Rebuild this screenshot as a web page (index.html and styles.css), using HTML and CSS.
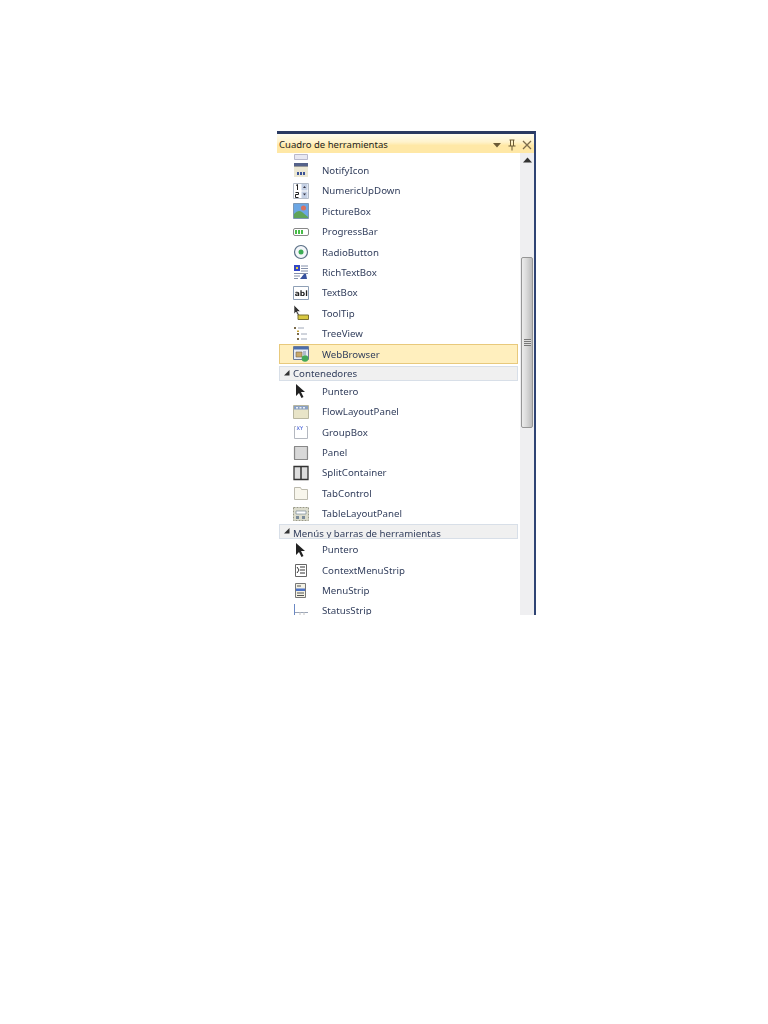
FILE: index.html
```html
<!DOCTYPE html>
<html lang="es">
<head>
<meta charset="utf-8">
<title>Cuadro de herramientas</title>
<link rel="stylesheet" href="styles.css">
</head>
<body>
<svg class="defs" width="0" height="0" aria-hidden="true">
  <symbol id="pointer" viewBox="0 0 16 16"><path d="M3 1v12l3-3 2.500 5 2-1-2.500-5h4z" fill="#222"/></symbol>
  <symbol id="tri" viewBox="0 0 8 8"><path d="M1 6.500 6.500 1v5.500z" fill="#333"/></symbol>
</svg>
<section class="panel">
  <header class="title">
    <span class="title-text">Cuadro de herramientas</span>
    <span class="title-btns">
      <svg width="10" height="10" viewBox="0 0 10 10"><path d="M1 3h8L5 7.500z" fill="#6b5a35"/></svg>
      <svg width="10" height="12" viewBox="0 0 10 12"><path d="M2.500 1h5M3.500 1v6M6.500 1v6M1.500 7h7M5 7v4.500" stroke="#6b5a35" fill="none"/></svg>
      <svg width="10" height="10" viewBox="0 0 10 10"><path d="M1 1l8 8M9 1 1 9" stroke="#7d6d4c" stroke-width="1.300" fill="none"/></svg>
    </span>
  </header>
  <div class="body">
    <div class="list">
      <div class="clip-top"><svg class="ico" width="16" height="16" viewBox="0 0 16 16"><path d="M1.500 10.500h13v5h-13z" fill="#e8e8f2" stroke="#b8b8cc"/></svg></div>
      <div class="row"><svg class="ico" width="16" height="16" viewBox="0 0 16 16"><path d="M1 1h14v3H1z" fill="#55628a"/><path d="M1 4h14v11H1z" fill="#ece8d4"/><path d="M1 4.500h14" stroke="#999"/><path d="M4 10h2v3H4zM7 10h2v3H7zM10 10h2v3h-2z" fill="#3a5296"/></svg><span>NotifyIcon</span></div>
      <div class="row"><svg class="ico" width="16" height="16" viewBox="0 0 16 16"><path d="M.5.500h15v15H.5z" fill="#fff" stroke="#b4bcc8"/><path d="M8.500 1h6v6.500h-6zM8.500 8.500h6V15h-6z" fill="#c4d0e4"/><path d="M3 2.500l1.500-1v5.500M2.500 9.500h3v2h-3v3h3" stroke="#222" fill="none"/><path d="M10 5l1.500-2L13 5zM10 10.500l1.500 2 1.500-2z" fill="#334"/></svg><span>NumericUpDown</span></div>
      <div class="row"><svg class="ico" width="16" height="16" viewBox="0 0 16 16"><path d="M.5.500h15v15H.5z" fill="#6ba6e4" stroke="#7c96b4"/><path d="M1 15V11q4-5 8-2l6 5v1z" fill="#5fa45a"/><circle cx="10.500" cy="5" r="2.500" fill="#d8705e"/></svg><span>PictureBox</span></div>
      <div class="row"><svg class="ico" width="16" height="16" viewBox="0 0 16 16"><rect x=".5" y="4.500" width="15" height="7" rx="1.500" fill="#fff" stroke="#888"/><path d="M2 6h2v4H2zM5 6h2v4H5zM8 6h2v4H8z" fill="#48bc48"/></svg><span>ProgressBar</span></div>
      <div class="row"><svg class="ico" width="16" height="16" viewBox="0 0 16 16"><circle cx="8" cy="8" r="6.500" fill="#f4f6fa" stroke="#5a7086" stroke-width="1.200"/><circle cx="8" cy="8" r="2.500" fill="#3cac54"/></svg><span>RadioButton</span></div>
      <div class="row"><svg class="ico" width="16" height="16" viewBox="0 0 16 16"><path d="M1 1h6v6H1z" fill="#3347c4"/><path d="M3 3h2v2H3z" fill="#e8d040"/><path d="M8 2h7M8 4.500h7M8 7h7M1 9.500h14M1 12h6M1 14.500h4" stroke="#8490aa"/><path d="M7 15l4-5h2l1 5z" fill="#38529e"/></svg><span>RichTextBox</span></div>
      <div class="row"><svg class="ico" width="16" height="16" viewBox="0 0 16 16"><path d="M.5 1.500h15v13H.5z" fill="#fff" stroke="#8fa0b6"/><text x="1.800" y="11" class="ico-text">abl</text></svg><span>TextBox</span></div>
      <div class="row"><svg class="ico" width="16" height="16" viewBox="0 0 16 16"><path d="M1 0v9l2-2 2 4 1.500-1-2-3.500h3z" fill="#333" stroke="#fff" stroke-width=".6"/><path d="M5 10h10.500v4.500H5z" fill="#d8c840" stroke="#7a7030"/></svg><span>ToolTip</span></div>
      <div class="row"><svg class="ico" width="16" height="16" viewBox="0 0 16 16"><path d="M1 1h2v2H1zM4 7h2v2H4zM4 12h2v2H4z" fill="#7a6a4a"/><path d="M5 2h6M8 8h6M8 13h6" stroke="#a0a8b8" fill="none"/><path d="M4 4.500h2v1.500H4z" fill="#c8a030"/></svg><span>TreeView</span></div>
      <div class="row row-sel"><svg class="ico" width="16" height="16" viewBox="0 0 16 16"><path d="M.5.500h15v13H.5z" fill="#e8ecf4" stroke="#6a7a98"/><path d="M1 1h14v2.500H1z" fill="#4c6eac"/><path d="M3 6h6v5H3z" fill="#c8a868" stroke="#77644a" stroke-width=".6"/><path d="M10 6h3M10 8h3" stroke="#7a88a4"/><circle cx="12" cy="12.500" r="3.300" fill="#44a858"/></svg><span>WebBrowser</span></div>
      <div class="group"><svg class="tri" width="8" height="8"><use href="#tri"/></svg><span>Contenedores</span></div>
      <div class="row"><svg class="ico" width="16" height="16"><use href="#pointer"/></svg><span>Puntero</span></div>
      <div class="row"><svg class="ico" width="16" height="16" viewBox="0 0 16 16"><path d="M.5 1.500h15v13H.5z" fill="#e8e4c8" stroke="#b8b6a0"/><path d="M1 2h14v3.500H1z" fill="#8aa0c2"/><path d="M3 3h2v1.500H3zM6.500 3h2v1.500h-2zM10 3h2v1.500h-2z" fill="#e8eef8"/></svg><span>FlowLayoutPanel</span></div>
      <div class="row"><svg class="ico" width="16" height="16" viewBox="0 0 16 16"><path d="M3 2.500H1.500v12h13v-12H13" fill="#fff" stroke="#b4b8c0"/><text x="3.500" y="6" class="ico-xy">XY</text></svg><span>GroupBox</span></div>
      <div class="row"><svg class="ico" width="16" height="16" viewBox="0 0 16 16"><path d="M1.500 1.500h13v13h-13z" fill="#d8d8d8" stroke="#222" stroke-width="1.200" stroke-dasharray="1 1"/></svg><span>Panel</span></div>
      <div class="row"><svg class="ico" width="16" height="16" viewBox="0 0 16 16"><path d="M1 1.500h14v13H1z" fill="#ddd" stroke="#333" stroke-width="1.300"/><path d="M8 1.500v13" stroke="#333" stroke-width="1.500"/></svg><span>SplitContainer</span></div>
      <div class="row"><svg class="ico" width="16" height="16" viewBox="0 0 16 16"><path d="M1.500 14.500v-12h6l1 2h6v10z" fill="#f8f6ec" stroke="#bcbaae"/></svg><span>TabControl</span></div>
      <div class="row"><svg class="ico" width="16" height="16" viewBox="0 0 16 16"><path d="M.5 1.500h15v13H.5z" fill="#dcdccc" stroke="#9a9a88" stroke-dasharray="2 1"/><path d="M3 5h10v3H3z" fill="#fff" stroke="#7a8a9a" stroke-width=".7"/><path d="M3 10h3v3H3zM9 10h3v3H9z" fill="#7a8a9a"/></svg><span>TableLayoutPanel</span></div>
      <div class="group group-clip"><svg class="tri" width="8" height="8"><use href="#tri"/></svg><span>Menús y barras de herramientas</span></div>
      <div class="row"><svg class="ico" width="16" height="16"><use href="#pointer"/></svg><span>Puntero</span></div>
      <div class="row"><svg class="ico" width="16" height="16" viewBox="0 0 16 16"><path d="M2.500 2.500h11v12h-11z" fill="#fff" stroke="#666"/><path d="M7 5h5M7 8h5M7 11h5M4 5l2 3-2 3" stroke="#333" fill="none"/></svg><span>ContextMenuStrip</span></div>
      <div class="row"><svg class="ico" width="16" height="16" viewBox="0 0 16 16"><path d="M2.500 1.500h10v14h-10z" fill="#f4f2e4" stroke="#777"/><path d="M4 4h4M4 11h7M4 13.500h7" stroke="#555"/><path d="M3 6.500h9v2.500H3z" fill="#4c72c8"/></svg><span>MenuStrip</span></div>
      <div class="row"><svg class="ico" width="16" height="16" viewBox="0 0 16 16"><path d="M1.500 1v11" stroke="#6a88c4"/><path d="M2 9.500h13" stroke="#9aa4b6"/><path d="M7 9v3M11 9v3" stroke="#c4c4c4"/></svg><span>StatusStrip</span></div>
    </div>
    <div class="track">
      <svg class="arrow" width="9" height="6" viewBox="0 0 9 6"><path d="M0 5.500 4.500 .5 9 5.500z" fill="#333"/></svg>
      <div class="thumb"><div class="grip"></div></div>
    </div>
  </div>
</section>
</body>
</html>
```
FILE: styles.css
```css
* { box-sizing: border-box; }
html, body { margin: 0; background: #fff; }
body { height: 1024px; overflow: hidden; }
.defs { position: absolute; }
.panel {
  width: 259px;
  height: 484px;
  margin: 131px 0 0 277px;
  display: flex;
  flex-direction: column;
  border-top: 3px solid #2a3a62;
  border-right: 2px solid #2f4474;
  font-family: "Noto Sans", "Liberation Sans", sans-serif;
  font-size: 9.700px;
  color: #34405e;
  filter: blur(.4px);
}
.title {
  height: 19px;
  flex: none;
  display: flex;
  align-items: center;
  justify-content: space-between;
  padding: 2px 3px 0 2px;
  background: linear-gradient(#fffcee, #fff3cc 42%, #ffe8a6 60%, #ffe8a6);
  color: #1c1c1c;
}
.title-text { font-size: 9.500px; }
.title-btns { display: flex; align-items: center; gap: 5px; margin-right: -1px; }
.body { flex: 1; display: flex; min-height: 0; }
.list { flex: 1; min-width: 0; overflow: hidden; padding: 0 2px 0 2px; }
.clip-top { height: 7.300px; overflow: hidden; padding-left: 14px; display: flex; align-items: flex-end; }
.row {
  height: 20.400px;
  display: flex;
  align-items: center;
  padding-left: 14px;
}
.row span { margin-left: 13px; white-space: nowrap; }
.ico { flex: none; display: block; }
.ico-text { font: bold 7.500px "DejaVu Sans", sans-serif; fill: #222; }
.ico-xy { font: 5px "DejaVu Sans", sans-serif; fill: #2040d0; }
.row-sel { background: #ffefbe; border: 1px solid #e8c97c; padding-left: 13px; }
.group {
  height: 15px;
  margin: 1.500px 0 .500px;
  display: flex;
  align-items: center;
  gap: 2px;
  padding-left: 3px;
  background: #f0f0f0;
  border: 1px solid #d8dfe8;
  overflow: hidden;
}
.group span { white-space: nowrap; }
.tri { flex: none; }
.group-clip { margin-top: 0; }
.group-clip span { padding-top: 4px; }
.track {
  width: 14px;
  flex: none;
  background: #efeff1;
  display: flex;
  flex-direction: column;
  align-items: center;
}
.arrow { margin-top: 4px; flex: none; }
.thumb {
  margin-top: 94px;
  width: 12px;
  height: 171px;
  border: 1px solid #969696;
  border-radius: 2px;
  background: linear-gradient(90deg, #ececec, #dcdcdc 40%, #bcbcbc);
  display: flex;
  align-items: center;
  justify-content: center;
}
.grip {
  width: 7px;
  height: 7px;
  background: repeating-linear-gradient(#777 0 1px, #ddd 1px 2px);
}
```
